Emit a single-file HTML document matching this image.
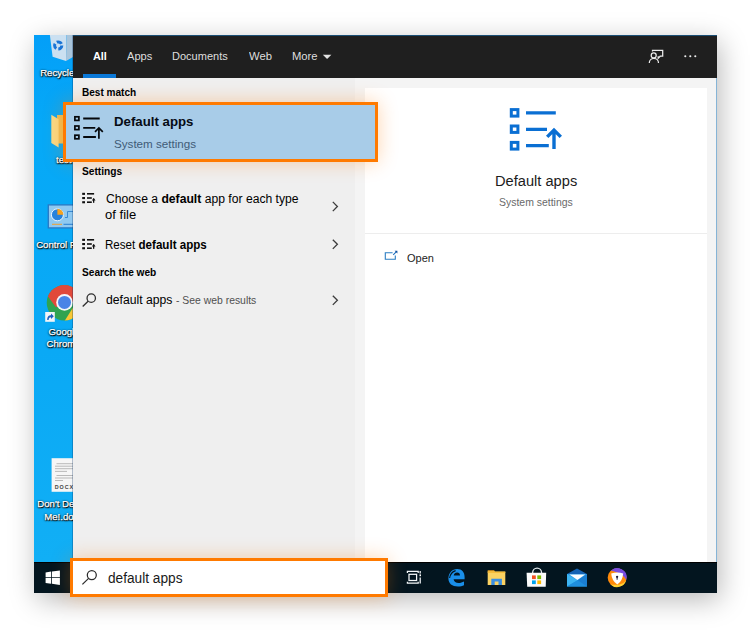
<!DOCTYPE html>
<html lang="en">
<head>
<meta charset="utf-8">
<title>Default apps search</title>
<style>
html,body{margin:0;padding:0}
body{width:750px;height:631px;background:#fff;position:relative;overflow:hidden;font-family:"Liberation Sans",sans-serif;color:#000}
.a{position:absolute}
svg.a{left:0;top:0;overflow:visible}
.t{position:absolute;white-space:nowrap;line-height:1;transform-origin:0 0}
#shadow{left:34px;top:35px;width:683px;height:558px;box-shadow:3px 7px 26px rgba(0,0,0,.28);background:#fff}
#desk{left:34px;top:35px;width:39px;height:527px;background:linear-gradient(#039ff8,#06a9f7 18%,#0aa9f5 60%,#11aff5);overflow:hidden}
#hdr{left:73px;top:35px;width:644px;height:43px;background:#1f1f1f;border-top:1px solid #1b4f75;box-sizing:border-box}
#left{left:73px;top:78px;width:282px;height:484px;background:#efefef}
#gap{left:355px;top:78px;width:362px;height:484px;background:#f4f4f4}
#card1{left:365px;top:88px;width:342px;height:145px;background:#fff}
#card2{left:365px;top:234px;width:342px;height:328px;background:#fff}
#edge{left:716px;top:78px;width:1px;height:484px;background:#86b4d6}
#task{left:34px;top:561.5px;width:683px;height:31.3px;background:#03151f;border-top:1px solid #000;box-sizing:border-box}
.dl{color:#fff;font-size:9.6px;-webkit-text-stroke:0.25px #fff;text-shadow:0 1px 1.5px #000,1px 1px 1px #000,0 0 2px rgba(0,0,0,.8)}
</style>
</head>
<body>
<div class="a" id="shadow"></div>
<div class="a" id="desk">
<svg class="a" width="39" height="527" viewBox="34 35 39 527">
<!-- recycle bin -->
<path d="M49.9 35 L66.5 35 L66 61 L52.6 56.7z" fill="#cbe0f1"/>
<path d="M66.5 35 L73 35 L73 57 L66 61z" fill="#a9c5dc"/>
<circle cx="58.2" cy="45.5" r="3.6" fill="none" stroke="#1a74d6" stroke-width="3" stroke-dasharray="5.4 2.1"/>
<!-- folder -->
<path d="M57 115 L73 115 L73 143.5 L57 143.5z" fill="#ecbf58"/>
<path d="M51.3 114.7 L58.6 119.2 L58.6 147.6 L51.3 143z" fill="#f8da86"/>
<!-- control panel -->
<rect x="48.3" y="204.9" width="30" height="23" fill="#8fc9f1" stroke="#2878c4" stroke-width="1.3"/>
<circle cx="57.4" cy="214.8" r="6" fill="#2583dc" stroke="#eef6fc" stroke-width="1"/>
<path d="M57.4 214.8 L57.4 208.8 A6 6 0 0 1 63.4 214.8z" fill="#f6a21e"/>
<path d="M52 224.3h10" stroke="#f0a030" stroke-width="1"/>
<path d="M63.5 224.3h10" stroke="#2a7fd0" stroke-width="1"/>
<path d="M65 217.5h2.5v-6h6" stroke="#3a8ad4" stroke-width="1" fill="none"/>
<!-- chrome -->
<clipPath id="cc"><circle cx="64.4" cy="302.8" r="17.7"/></clipPath>
<circle cx="64.4" cy="302.8" r="17.7" fill="#2fa350"/>
<g clip-path="url(#cc)">
<path d="M39.5 284.8L55.9 307.2L64.5 302.4H90V270H39.5z" fill="#e1493a"/>
<path d="M63.3 323L76.2 302.4H90V330H63.3z" fill="#f8c734"/>
</g>
<circle cx="64.5" cy="302.4" r="8.3" fill="#f4f6f8"/>
<circle cx="64.5" cy="302.4" r="6.5" fill="#4a84e6"/>
<rect x="45.2" y="312" width="9.6" height="9.8" fill="#f2f4f7"/>
<path d="M47.2 320 C47.2 316.5 48.8 315.3 51 315.3 L51 313.6 L53.8 316.3 L51 319 L51 317.3 C49.6 317.3 48.8 318 48.6 320z" fill="#1b5fc0"/>
<!-- docx -->
<rect x="51.6" y="458.2" width="25" height="33.6" fill="#f6f6f6"/>
<g stroke="#a9a9a9" stroke-width="0.8">
<path d="M56.5 463.7h17M55 466.2h18M55 468.7h18M55 471.4h12M56.5 475.5h17M55 478h18M55 480.5h8"/>
</g>
<text x="54.8" y="488.6" font-family="Liberation Sans, sans-serif" font-weight="bold" font-size="5.4" letter-spacing="0.9" fill="#444">DOCX</text>
</svg>
<div class="a" style="left:38px;top:0;width:1px;height:527px;background:rgba(0,40,90,.28)"></div>
<span class="t dl" id="dRec" style="left:6.2px;top:32.5px">Recycle Bin</span>
<span class="t dl" id="dTe" style="left:22px;top:120.4px">test</span>
<span class="t dl" id="dCtl" style="left:2.2px;top:205.2px">Control Panel</span>
<span class="t dl" id="dGo" style="left:14.6px;top:292.1px">Google</span>
<span class="t dl" id="dCh" style="left:12.5px;top:304.4px">Chrome</span>
<span class="t dl" id="dDo" style="left:3.3px;top:463.9px">Don't Delete</span>
<span class="t dl" id="dMe" style="left:10.3px;top:476.5px">Me!.docx</span>
</div>
<div class="a" id="hdr"></div>
<div class="a" id="left"></div>
<div class="a" id="gap"></div>
<div class="a" id="card1"></div>
<div class="a" id="card2"></div>
<div class="a" id="edge"></div>
<div class="a" id="task"></div>
<div class="a" style="left:83.3px;top:74px;width:33px;height:3.6px;background:#0a78d7"></div>
<div class="a" id="sel" style="left:63px;top:102px;width:315px;height:59.5px;box-sizing:border-box;border:3.2px solid #ff7a00;background:#a8cce8;box-shadow:0 0 20px rgba(255,122,0,.32)"></div>
<div class="a" style="left:365px;top:233px;width:342px;height:1px;background:#ededed"></div>
<div class="a" id="sbox" style="left:70px;top:558px;width:318px;height:38.6px;box-sizing:border-box;border:3.2px solid #ff7a00;background:#fff;box-shadow:0 0 20px rgba(255,122,0,.30)"></div>
<span class="t" id="tAll" style="left:92.81px;top:51.19px;font-size:11px;color:#fff;transform:scaleX(0.9884);font-weight:bold">All</span>
<span class="t" id="tApps" style="left:126.90px;top:51.19px;font-size:11px;color:#dedede;transform:scaleX(1.0088)">Apps</span>
<span class="t" id="tDocs" style="left:172.10px;top:51.19px;font-size:11px;color:#dedede;transform:scaleX(1.0011)">Documents</span>
<span class="t" id="tWeb" style="left:248.69px;top:51.19px;font-size:11px;color:#dedede;transform:scaleX(1.0258)">Web</span>
<span class="t" id="tMore" style="left:292.29px;top:51.19px;font-size:11px;color:#dedede;transform:scaleX(1.0214)">More</span>
<span class="t" id="tBest" style="left:82.31px;top:88.08px;font-size:10.3px;color:#000;transform:scaleX(0.9763);font-weight:bold">Best match</span>
<span class="t" id="tDA" style="left:114.19px;top:116.38px;font-size:12.9px;color:#060b14;transform:scaleX(1.0264);font-weight:bold">Default apps</span>
<span class="t" id="tSS" style="left:114.36px;top:138.56px;font-size:10.8px;color:#3f5b77;transform:scaleX(1.0772)">System settings</span>
<span class="t" id="tSet" style="left:82.21px;top:166.88px;font-size:10.3px;color:#000;transform:scaleX(0.9895);font-weight:bold">Settings</span>
<span class="t" id="tCh1" style="left:105.51px;top:192.89px;font-size:12.3px;color:#000;transform:scaleX(0.9886)">Choose a <b>default</b> app for each type</span>
<span class="t" id="tCh2" style="left:105.47px;top:208.99px;font-size:12.3px;color:#000;transform:scaleX(1.0610)">of file</span>
<span class="t" id="tRes" style="left:105.23px;top:238.89px;font-size:12.3px;color:#000;transform:scaleX(0.9427)">Reset <b>default apps</b></span>
<span class="t" id="tSW" style="left:82.21px;top:267.68px;font-size:10.3px;color:#000;transform:scaleX(0.9835);font-weight:bold">Search the web</span>
<span class="t" id="tQ" style="left:105.50px;top:293.99px;font-size:12.3px;color:#000;transform:scaleX(0.9908)">default apps</span>
<span class="t" id="tSee" style="left:176.00px;top:295.68px;font-size:10.3px;color:#505050;transform:scaleX(1.0093)">- See web results</span>
<span class="t" id="tDA2" style="left:495.08px;top:173.55px;font-size:14px;color:#1c1c1c;transform:scaleX(1.0457)">Default apps</span>
<span class="t" id="tSS2" style="left:498.79px;top:198.08px;font-size:10.3px;color:#6a6a6a;transform:scaleX(1.0153)">System settings</span>
<span class="t" id="tOpen" style="left:407.38px;top:252.91px;font-size:10.5px;color:#1c1c1c;transform:scaleX(1.0472)">Open</span>
<span class="t" id="tSearch" style="left:107.51px;top:570.85px;font-size:14px;color:#1a1a1a;transform:scaleX(0.9764)">default apps</span>
<svg class="a" width="750" height="631" viewBox="0 0 750 631">
<!-- header: more arrow, feedback, dots -->
<path d="M322.8 54.8h8.6l-4.3 4.3z" fill="#e2e2e2"/>
<g fill="none" stroke="#ececec" stroke-width="1.25">
<circle cx="653.7" cy="55.4" r="2.5"/>
<path d="M649.3 63 A4.6 4.6 0 0 1 658.5 63"/>
<path d="M652.5 51.5 V50.3 H662.7 V56.2 H660.2 L658.2 58.3 V56.2"/>
</g>
<g fill="#ececec"><circle cx="685.3" cy="56.3" r="1.05"/><circle cx="690.3" cy="56.3" r="1.05"/><circle cx="695.3" cy="56.3" r="1.05"/></g>

<!-- selected item icon -->
<g fill="none" stroke="#05080c" stroke-width="1.7">
<rect x="74.9" y="116.8" width="4" height="3.6"/>
<rect x="74.9" y="126" width="4" height="3.6"/>
<rect x="74.9" y="135.2" width="4" height="3.6"/>
<path d="M83.2 118.5H99.7M83.2 127.8H95.3M83.2 137H95.9" stroke-width="1.8"/>
<path d="M98.9 138.8V128.2M95 131.9L98.9 127.9L102.8 131.9" stroke-width="1.7"/>
</g>

<!-- small list icons -->
<g id="li1" fill="#111" stroke="none">
<rect x="82.2" y="192.8" width="2.8" height="2.1"/><rect x="82.2" y="197" width="2.8" height="2.1"/><rect x="82.2" y="201.2" width="2.8" height="2.1"/>
<rect x="87" y="193" width="7.1" height="1.6"/><rect x="87" y="197.2" width="4.8" height="1.6"/><rect x="87" y="201.4" width="4.8" height="1.6"/>
<rect x="93" y="198.6" width="1.3" height="4.2"/><path d="M91.8 200.4L93.65 198L95.6 200.4z"/>
</g>
<g id="li2" fill="#111" stroke="none" transform="translate(0 46)">
<rect x="82.2" y="192.8" width="2.8" height="2.1"/><rect x="82.2" y="197" width="2.8" height="2.1"/><rect x="82.2" y="201.2" width="2.8" height="2.1"/>
<rect x="87" y="193" width="7.1" height="1.6"/><rect x="87" y="197.2" width="4.8" height="1.6"/><rect x="87" y="201.4" width="4.8" height="1.6"/>
<rect x="93" y="198.6" width="1.3" height="4.2"/><path d="M91.8 200.4L93.65 198L95.6 200.4z"/>
</g>
<!-- web search icon -->
<g fill="none" stroke="#2e2e2e" stroke-width="1.3">
<circle cx="91.25" cy="298.15" r="4.2"/><path d="M88.1 301.3L82.7 306.5"/>
</g>
<!-- chevrons -->
<g fill="none" stroke="#3c3c3c" stroke-width="1.3">
<path d="M332.8 201.9L337.4 206.5L332.8 211.1"/>
<path d="M332.8 239.7L337.4 244.3L332.8 248.9"/>
<path d="M332.8 295.7L337.4 300.3L332.8 304.9"/>
</g>

<!-- big blue icon -->
<g fill="none" stroke="#0a6fd3">
<g stroke-width="3">
<rect x="511.3" y="109.6" width="6.6" height="6.5"/>
<rect x="511.3" y="126" width="6.6" height="6.4"/>
<rect x="511.3" y="142.4" width="6.6" height="6.7"/>
</g>
<g stroke-width="3.3">
<path d="M526 112.9H555.8M526 129.3H547M526 145.6H548.8"/>
<path d="M554 148.9V130.6M547.2 136.9L554 130.1L560.8 136.9" stroke-width="3.4"/>
</g>
</g>

<!-- open icon -->
<g fill="none" stroke="#2a7dc2" stroke-width="1.1">
<path d="M392.6 252.8H385.3V259.3H395.3V255.6"/>
<path d="M393.2 254.8L396.4 251.6" stroke="#1d6fbe"/>
</g>
<path d="M394.6 250.7H397.4V253.5z" fill="#0d4f9e"/>

<!-- search box icon -->
<g fill="none" stroke="#2b2b2b" stroke-width="1.25">
<circle cx="91.8" cy="575.1" r="4.5"/><path d="M88.6 578.4L82.4 584.4"/>
</g>

<!-- windows logo -->
<g fill="#fff">
<path d="M45.6 572.4L51.2 571.6V577.2H45.6z"/>
<path d="M52 571.5L59.9 570.4V577.2H52z"/>
<path d="M45.6 578H51.2V583.7L45.6 582.9z"/>
<path d="M52 578H59.9V584.9L52 583.8z"/>
</g>

<!-- task view -->
<g fill="none" stroke="#f4f7f9" stroke-width="1.25">
<rect x="409" y="574.3" width="7.6" height="6.2"/>
<path d="M407.4 573V571.4H418.2V573M407.4 581.8V583.2H418.2V581.8"/>
<path d="M420.2 577.5V583.6M420.2 571V573.4"/>
</g>
<rect x="419.5" y="574.4" width="1.5" height="1.8" fill="#fff"/>

<!-- edge -->
<path d="M448.4 578.6 C448.4 573 452 568.9 457.2 568.9 C462 568.9 464.6 572.2 464.6 577 V579.2 H453.6 C453.9 581.6 455.8 582.9 458.6 582.9 C460.6 582.9 462.4 582.3 464 581.4 V585.2 C462.4 586.1 460.4 586.6 457.9 586.6 C452.2 586.6 448.4 583.6 448.4 578.6z M453.7 575.6 H460 C460 573.8 459 572.6 457.1 572.6 C455.3 572.6 454.1 573.8 453.7 575.6z" fill="#1a8fe9"/>
<path d="M449.6 578 C450.2 574.4 452.2 571.6 455.6 570.6" fill="none" stroke="#03151f" stroke-width="1.1"/>

<!-- file explorer -->
<path d="M487.7 570.2H494.2L495 572H487.7z" fill="#f2a41f"/>
<rect x="487.7" y="571.6" width="17.6" height="13.4" fill="#fbd262"/>
<path d="M487.7 571.6H505.3V573H487.7z" fill="#f6bd3b"/>
<path d="M491.3 578.8H501.9V585H498.5V581.6H494.7V585H491.3z" fill="#3a8ee2"/>

<!-- store -->
<path d="M532.6 573 A4.5 4.9 0 0 1 541.6 573" fill="none" stroke="#dfe6ea" stroke-width="1.3"/>
<path d="M526.6 572.7H546.2L545.7 586.8H527.2z" fill="#fbfbfb"/>
<rect x="532" y="575.4" width="3.8" height="3.7" fill="#f25022"/>
<rect x="537.3" y="575.4" width="3.8" height="3.7" fill="#7fba00"/>
<rect x="532" y="580.4" width="3.8" height="3.7" fill="#00a4ef"/>
<rect x="537.3" y="580.4" width="3.8" height="3.7" fill="#ffb900"/>

<!-- mail -->
<path d="M567 574L577 568.4L587 574z" fill="#1462b4"/>
<rect x="567" y="574" width="20" height="12.5" fill="#2497e3"/>
<path d="M567 574L577.5 580.2L567 586.5z" fill="#3db4f2"/>
<path d="M567 586.5L577.5 580.2L587 586.5z" fill="#1f8fde"/>
<path d="M587 574V586.5L577.5 580.2z" fill="#1a7ed2"/>
<path d="M569.4 574.4H585.2L577.4 580z" fill="#fafcfe"/>

<!-- avast -->
<circle cx="617.1" cy="577.7" r="9.4" fill="#ff8a0a"/>
<path d="M610.8 570.7 A9.4 9.4 0 0 1 626.3 580 C624.5 575.5 618 571.8 610.8 570.7z" fill="#7a4de0"/>
<path d="M612.5 569.5 A9.4 9.4 0 0 1 626.45 577 L623.5 573.5z" fill="#7a4de0"/>
<path d="M610.5 584.4 A9.4 9.4 0 0 0 626.4 579 C625.5 583 620 586 610.5 584.4z" fill="#ffd233"/>
<path d="M611.2 573.6 Q617.3 571.6 623.2 573.6 Q622.6 581 617.3 584.6 Q611.8 581 611.2 573.6z" fill="#fff"/>
<circle cx="617.1" cy="576.8" r="1.15" fill="#1d1a3a"/><rect x="616.6" y="577" width="1" height="2.7" fill="#1d1a3a"/>
</svg>

</body>
</html>
